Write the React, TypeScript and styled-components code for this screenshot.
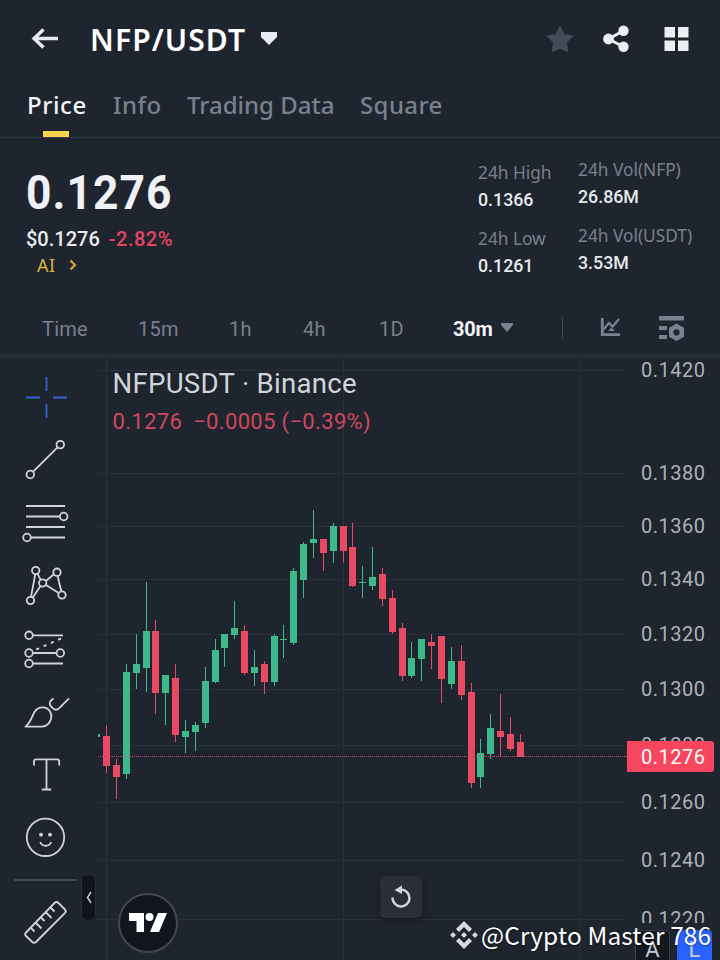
import React from 'react';
import styled, { createGlobalStyle } from 'styled-components';

const GlobalStyle = createGlobalStyle`
  * { box-sizing: border-box; }
  body { margin: 0; background: #1f252f; }
`;

const Page = styled.div`
  width: 720px;
  height: 960px;
  position: relative;
  overflow: hidden;
  display: flex;
  flex-direction: column;
  background: #1f252f;
  color: #eaecef;
  font-family: 'Noto Sans', sans-serif;
  white-space: nowrap;
`;

const Header = styled.header`
  height: 78px;
  display: flex;
  align-items: center;
  padding: 0 30px 0 31px;
`;

const Pair = styled.h1`
  margin: 2px 13px 0 31px;
  width: 158px;
  font: 600 30px/40px 'Noto Sans', sans-serif;
  letter-spacing: 1.1px;
  color: #fff;
`;

const HeaderActions = styled.div`
  margin-left: auto;
  display: flex;
  align-items: center;
  gap: 28px;
`;

const Tabs = styled.nav`
  height: 60px;
  display: flex;
  padding: 2px 0 0 27px;
  border-bottom: 1px solid #343b46;
`;

const Tab = styled.div<{ $active?: boolean; $width: number; $spacing?: number }>`
  width: ${p => p.$width}px;
  height: 57px;
  display: flex;
  flex-direction: column;
  justify-content: space-between;
  font: 500 24px/50px 'Noto Sans', sans-serif;
  letter-spacing: ${p => p.$spacing ?? 0}px;
  color: ${p => (p.$active ? '#f3f4f6' : '#79808e')};
`;

const Underline = styled.i`
  width: 26px;
  height: 6px;
  margin-left: 16px;
  background: #f5d54f;
`;

const Summary = styled.section`
  height: 164px;
  display: flex;
  justify-content: space-between;
  padding: 25px 0 0 26px;
`;

const PriceColumn = styled.div`
  display: flex;
  flex-direction: column;
`;

const LastPrice = styled.div`
  font: 700 49px/60px Roboto, sans-serif;
  letter-spacing: 1.2px;
  transform: scaleX(0.905);
  transform-origin: left;
  color: #eff1f4;
`;

const FiatRow = styled.div`
  display: flex;
  gap: 9px;
  margin-top: 1px;
  font: 500 20px/30px Roboto, sans-serif;
`;

const Change = styled.span`
  letter-spacing: 0.5px;
  color: #e34560;
`;

const AiLink = styled.div`
  display: flex;
  align-items: center;
  gap: 13px;
  margin-top: -1px;
  padding-left: 11px;
  font: 400 18px/24px 'Noto Sans', sans-serif;
  letter-spacing: 0.5px;
  color: #d9b43a;
`;

const Stats = styled.div`
  display: flex;
`;

const StatColumn = styled.div<{ $width: number; $offset: number }>`
  width: ${p => p.$width}px;
  margin-top: ${p => p.$offset}px;
`;

const Stat = styled.div`
  height: 66px;
`;

const StatLabel = styled.div`
  font: 400 17.3px/26px 'Noto Sans', sans-serif;
  color: #79808c;
`;

const StatValue = styled.div`
  font: 500 17.8px/27px Roboto, sans-serif;
  color: #e6e9ed;
`;

const Intervals = styled.nav`
  height: 52px;
  display: flex;
  align-items: center;
  padding-left: 42px;
  font: 400 20px/30px Roboto, sans-serif;
  color: #79808c;
`;

const Interval = styled.div<{ $width: number; $active?: boolean }>`
  width: ${p => p.$width}px;
  display: flex;
  align-items: center;
  gap: 8px;
  padding-top: 2px;
  font-weight: ${p => (p.$active ? 700 : 400)};
  letter-spacing: ${p => (p.$active ? '-0.2px' : '0.2px')};
  color: ${p => (p.$active ? '#f3f4f6' : '#79808c')};

  svg { margin-bottom: 3px; }
`;

const Separator = styled.i`
  width: 1px;
  height: 21px;
  margin-right: 36px;
  background: #414854;
`;

const ChartArea = styled.main`
  height: 606px;
  display: flex;
  border-top: 4px solid #262c36;
`;

const ToolBar = styled.aside`
  width: 98px;
  flex: none;
`;

const Plot = styled.section`
  flex: 1;
  position: relative;
`;

const Legend = styled.div`
  position: absolute;
  left: 14.5px;
  top: 7px;
  color: #d1d4dc;
  font: 400 27.6px/38px Roboto, sans-serif;
  letter-spacing: 0.28px;
`;

const LegendValues = styled.div`
  display: flex;
  gap: 11px;
  font-size: 22px;
  letter-spacing: 0.34px;
  color: #d0485d;
`;

const ResetButton = styled.button`
  position: absolute;
  left: 282px;
  top: 518px;
  width: 42px;
  height: 42px;
  display: grid;
  place-items: center;
  padding: 0;
  border: 0;
  border-radius: 5px;
  background: #2a2e39;
  box-shadow: 0 2px 5px #12161e;
`;

const TradingViewBadge = styled.div`
  position: absolute;
  left: 20px;
  top: 535px;
  width: 60px;
  height: 60px;
  display: grid;
  place-items: center;
  border: 2px solid #434854;
  border-radius: 50%;
  background: #11151e;
`;

const CollapseHandle = styled.div`
  position: absolute;
  left: -17px;
  top: 516px;
  width: 15px;
  height: 47px;
  display: grid;
  place-items: center;
  border: 1px solid #2a2f39;
  border-radius: 6px;
  background: #10141d;
`;

const PriceTag = styled.div`
  position: absolute;
  left: 529px;
  top: 383px;
  width: 87px;
  height: 31px;
  padding-left: 14px;
  border-radius: 0 3px 3px 0;
  background: #f6465d;
  color: #fff;
  font: 400 20px/32px Roboto, sans-serif;
  letter-spacing: 0.5px;
`;

const ScaleButtons = styled.div`
  position: absolute;
  left: 537px;
  top: 572px;
  display: flex;
  gap: 7px;
`;

const ScaleButton = styled.div<{ $on?: boolean }>`
  width: 35px;
  height: 36px;
  border: 1px solid ${p => (p.$on ? '#2962ff' : '#3a3f4a')};
  border-radius: 4px;
  background: ${p => (p.$on ? '#2962ff' : '#141821')};
  color: #c6cbd4;
  text-align: center;
  font: 400 22px/38px Roboto, sans-serif;
`;

const Watermark = styled.div`
  position: absolute;
  left: 450px;
  top: 915px;
  display: flex;
  align-items: center;
  gap: 3px;
  color: #fff;
  font: 400 24.4px/40px 'Noto Sans CJK SC', sans-serif;
  letter-spacing: 0.15px;
  text-shadow: 0 1px 2px #0008;
`;

const UP = '#3db98a';
const DOWN = '#ea4a61';
const ORIGIN_X = 98;
const ORIGIN_Y = 358;

type Candle = [x: number, up: number, top: number, bottom: number, high: number, low: number];

const candles: Candle[] = [
  [103, 0, 736, 766, 725, 773], [113, 0, 765, 777, 759, 799], [123, 1, 672, 774, 664, 779],
  [133, 1, 664, 673, 634, 689], [143, 1, 631, 668, 582, 692], [152, 0, 631, 693, 620, 714],
  [162, 1, 675, 693, 675, 725], [172, 0, 678, 735, 664, 742], [182, 1, 731, 737, 720, 753],
  [192, 1, 725, 732, 722, 751], [202, 1, 681, 723, 667, 728], [212, 1, 650, 682, 639, 683],
  [221, 1, 634, 648, 634, 667], [231, 1, 628, 635, 601, 639], [241, 0, 631, 673, 625, 675],
  [251, 1, 667, 673, 650, 686], [261, 0, 664, 682, 661, 694], [271, 1, 636, 682, 634, 686],
  [280, 1, 639, 640, 625, 658], [290, 1, 571, 643, 568, 645], [300, 1, 544, 580, 542, 598],
  [310, 1, 539, 543, 510, 558], [320, 0, 539, 553, 539, 571], [330, 1, 526, 551, 523, 563],
  [340, 0, 526, 551, 526, 563], [349, 0, 547, 586, 523, 587], [359, 1, 582, 583, 566, 598],
  [369, 1, 577, 586, 547, 590], [379, 0, 574, 599, 568, 606], [389, 0, 598, 632, 590, 634],
  [399, 0, 628, 676, 623, 681], [408, 1, 658, 676, 642, 678], [418, 1, 639, 659, 639, 681],
  [428, 0, 642, 646, 634, 669], [438, 0, 636, 679, 636, 703], [448, 1, 661, 684, 647, 689],
  [458, 0, 661, 695, 645, 700], [468, 0, 692, 783, 683, 788], [477, 1, 753, 777, 739, 788],
  [487, 1, 728, 754, 714, 759], [497, 0, 731, 737, 694, 756], [507, 0, 734, 749, 717, 751],
  [517, 0, 742, 757, 734, 757],
];

const levels: [y: number, label: string][] = [
  [370, '0.1420'], [473, '0.1380'], [526, '0.1360'], [579, '0.1340'], [634, '0.1320'],
  [689, '0.1300'], [745, '0.1280'], [802, '0.1260'], [860, '0.1240'], [919, '0.1220'],
];

const CandleChart = () => (
  <svg width="622" height="602" viewBox={`${ORIGIN_X} ${ORIGIN_Y} 622 602`} display="block">
    <defs>
      <clipPath id="axis"><rect x="627" y="358" width="93" height="565" /></clipPath>
    </defs>
    <g fill="#2a303a">
      {levels.map(([y]) => <rect key={y} x="98" y={y} width="529" height="1" />)}
      {[106, 343, 579].map(x => <rect key={x} x={x} y="358" width="1" height="602" />)}
    </g>
    <rect x="98" y="734" width="2" height="3" fill={UP} />
    {candles.map(([x, up, top, bottom, high, low]) => (
      <g key={x} fill={up ? UP : DOWN}>
        <rect x={x + 3} y={high} width="1" height={low - high} />
        <rect x={x} y={top} width="7" height={bottom - top} />
      </g>
    ))}
    <path d="M98 756.5H627" stroke="#c24c60" strokeDasharray="1 1" />
    <g clipPath="url(#axis)" fill="#adb1ba" fontFamily="Roboto, sans-serif" fontSize="20" letterSpacing="0.5">
      {levels.map(([y, label]) => <text key={y} x="641" y={y + 7}>{label}</text>)}
    </g>
  </svg>
);

const DrawingTools = () => (
  <svg width="98" height="602" viewBox="0 358 98 602" fill="none" stroke="#d1d4dc" strokeWidth="1.8" display="block">
    <path d="M46.500 377v14M46.500 404v14M26 397.500h14M53 397.500h14" stroke="#3562d2" />
    <g>
      <circle cx="60.300" cy="444.600" r="3.800" /><circle cx="30.300" cy="474.500" r="3.800" />
      <path d="M57.500 447.400 33.200 471.700" />
    </g>
    <g>
      <path d="M26 506h39M26 516.500h34M26 527h39M31 537.500h34" />
      <circle cx="63.700" cy="516.500" r="3.800" /><circle cx="27" cy="537.500" r="3.800" />
    </g>
    <g>
      <circle cx="35.700" cy="570.500" r="3.700" /><circle cx="57" cy="572.200" r="3.700" />
      <circle cx="42.700" cy="583" r="3.700" /><circle cx="62" cy="595" r="3.700" /><circle cx="30.500" cy="600.500" r="3.700" />
      <path d="M35.300 574.200 31 596.800M37.500 573.700l3.200 6.100M46 581l7.800-6.700M57.600 576l3.700 15.300M46 585l12.700 8M40.500 586l-7.700 11.500" />
    </g>
    <g>
      <circle cx="29" cy="635.300" r="3.800" /><circle cx="29" cy="653" r="3.800" />
      <circle cx="60.300" cy="653" r="3.800" /><circle cx="29" cy="663.500" r="3.800" />
      <path d="M33 635.300h30M33 653h23.500M33 663.500h30" />
      <path d="M37 649.200 61 638.500" strokeWidth="2" strokeDasharray="1.500 6.500" strokeLinecap="round" />
    </g>
    <g strokeLinejoin="round">
      <path d="M25.500 726.700C31 722 32 716 34.500 712c4-6 12-6 15.500-.5 3.500 6-.5 15-8.500 15.200Z" />
      <path d="M53.500 698.500c-4 2.500-4.500 5-3 7.300l2.500 2.600c2 1.700 4.200 1.600 6-.1l10-10" />
    </g>
    <path d="M34 765.500v-4q0-2.200 2.200-2.200H57q2.200 0 2.200 2.200v4M46.500 759.500v30M41.800 789.500h9.400" />
    <g>
      <circle cx="45.500" cy="837.300" r="18.700" />
      <path d="M40.200 842c2 5 9 5 11 0" />
      <g fill="#d1d4dc" stroke="none"><circle cx="41" cy="834.700" r="1.900" /><circle cx="50" cy="834.700" r="1.900" /></g>
    </g>
    <path d="M14 880h63" stroke="#444a55" />
    <g strokeLinejoin="round">
      <path d="M26 932.500 54.500 903q2-2 4 0l6.500 6.500q1.500 1.700 0 3.300L36 942q-2 1.600-3.700 0L26 936q-1.800-1.700 0-3.500Z" />
      <path d="m31 928 3.500 3.500M36 923l5.500 5.500M41 917.500l3.500 3.500M46 912.500l5.500 5.500M50.500 907.500l4 4" />
    </g>
  </svg>
);

const CaretDown = ({ large = false }: { large?: boolean }) => large ? (
  <svg width="16" height="14" viewBox="0 0 16 14"><path d="M0 0h16v5L8 13 0 5Z" fill="#e8eaef" /></svg>
) : (
  <svg width="12" height="9" viewBox="0 0 12 9"><path d="M0 0h12v2L6 9 0 2Z" fill="#79808e" /></svg>
);

const stats = [
  { width: 100, offset: 2, items: [['24h High', '0.1366'], ['24h Low', '0.1261']] },
  { width: 142, offset: -1, items: [['24h Vol(NFP)', '26.86M'], ['24h Vol(USDT)', '3.53M']] },
];

export default function App() {
  return (
    <Page>
      <GlobalStyle />
      <Header>
        <svg width="28" height="22" viewBox="0 0 28 22" fill="none" stroke="#e8eaef" strokeWidth="3.400">
          <path d="M12.500 1.500 3 10.500l9.500 9M3 10.500h24" />
        </svg>
        <Pair>NFP/USDT</Pair>
        <CaretDown large />
        <HeaderActions>
          <svg width="28" height="28" viewBox="0 0 28 28">
            <path d="m14 2.500 3.500 7.700 8.500 1.100-6.200 6 1.500 8.500L14 22.700l-7.300 3.100 1.500-8.500-6.200-6 8.500-1.100Z" fill="#444c5a" stroke="#444c5a" strokeWidth="2" strokeLinejoin="round" />
          </svg>
          <svg width="28" height="28" viewBox="0 0 28 28" fill="#eceef2">
            <path d="M22 5.500 6.500 14 22 22" fill="none" stroke="#eceef2" strokeWidth="3" />
            <circle cx="21.500" cy="5.700" r="5.200" /><circle cx="6.500" cy="14" r="5.400" /><circle cx="21.500" cy="21.700" r="5.200" />
          </svg>
          <svg width="32" height="28" viewBox="0 0 32 28" fill="#eceef2">
            <path d="M6.500 2H17v10.500H6.500ZM20 2h10.500v10.500H20ZM6.500 15.500H17V26H6.500ZM20 15.500h10.500V26H20Z" />
          </svg>
        </HeaderActions>
      </Header>
      <Tabs>
        <Tab $active $width={86} $spacing={0.6}>Price<Underline /></Tab>
        <Tab $width={74} $spacing={0.5}>Info</Tab>
        <Tab $width={173}>Trading Data</Tab>
        <Tab $width={100} $spacing={0.4}>Square</Tab>
      </Tabs>
      <Summary>
        <PriceColumn>
          <LastPrice>0.1276</LastPrice>
          <FiatRow><span>$0.1276</span><Change>-2.82%</Change></FiatRow>
          <AiLink>
            AI
            <svg width="8" height="12" viewBox="0 0 8 12" fill="none" stroke="#d9a52f" strokeWidth="2.200"><path d="m1.500 1.500 4.500 4.500-4.500 4.500" /></svg>
          </AiLink>
        </PriceColumn>
        <Stats>
          {stats.map(column => (
            <StatColumn key={column.width} $width={column.width} $offset={column.offset - 5}>
              {column.items.map(([label, value]) => (
                <Stat key={label}><StatLabel>{label}</StatLabel><StatValue>{value}</StatValue></Stat>
              ))}
            </StatColumn>
          ))}
        </Stats>
      </Summary>
      <Intervals>
        <Interval $width={96}>Time</Interval>
        <Interval $width={91}>15m</Interval>
        <Interval $width={74}>1h</Interval>
        <Interval $width={76}>4h</Interval>
        <Interval $width={74}>1D</Interval>
        <Interval $width={109} $active>30m<CaretDown /></Interval>
        <Separator />
        <svg width="60" height="26" viewBox="0 0 60 26" fill="none" stroke="#79808e" strokeWidth="2.800">
          <path d="M3.300 3v16.700H21" />
          <path d="m4 15 6-7 3.500 3.500L20 4" strokeWidth="2.400" />
          <path d="m9 16 3.500-3.500L16 16Z" fill="#79808e" stroke="none" />
        </svg>
        <svg width="26" height="28" viewBox="0 0 26 28" fill="#79808e">
          <path d="M0 2h25v4.500H0ZM0 12h8v4H0ZM0 21h8v4H0ZM17.500 9.500l7.500 4.300v8.900L17.500 27 10 22.700v-8.900Z" />
          <circle cx="17.500" cy="18.300" r="3.100" fill="#1f252f" />
        </svg>
      </Intervals>
      <ChartArea>
        <ToolBar><DrawingTools /></ToolBar>
        <Plot>
          <CandleChart />
          <Legend>
            NFPUSDT · Binance
            <LegendValues><span>0.1276</span><span>−0.0005 (−0.39%)</span></LegendValues>
          </Legend>
          <PriceTag>0.1276</PriceTag>
          <CollapseHandle>
            <svg width="6" height="13" viewBox="0 0 6 13" fill="none" stroke="#c6cbd4" strokeWidth="1.500"><path d="M5 1 1.500 6.500 5 12" /></svg>
          </CollapseHandle>
          <TradingViewBadge>
            <svg width="38" height="20" viewBox="0 0 38 20" fill="#fff">
              <path d="M0 0h15v19H7.500V8H0ZM29 0h9l-8 19h-9Z" /><circle cx="20.500" cy="4" r="4" />
            </svg>
          </TradingViewBadge>
          <ResetButton>
            <svg width="22" height="24" viewBox="0 0 22 24" fill="none" stroke="#d1d4dc" strokeWidth="2.500">
              <path d="M2.500 12.500a8.500 8.500 0 1 0 8.500-8H9" /><path d="m4.500 5 7.500-4.500v8.500Z" fill="#d1d4dc" stroke="none" />
            </svg>
          </ResetButton>
          <ScaleButtons><ScaleButton>A</ScaleButton><ScaleButton $on>L</ScaleButton></ScaleButtons>
        </Plot>
      </ChartArea>
      <Watermark>
        <svg width="28" height="28" viewBox="0 0 28 28" fill="#d9dadc">
          <path d="m14 0 8 8-3 3-5-5-5 5-3-3ZM14 28l8-8-3-3-5 5-5-5-3 3ZM3 11l3 3-3 3-3-3ZM25 11l3 3-3 3-3-3ZM14 11l3 3-3 3-3-3Z" />
        </svg>
        <span>@Crypto Master 786</span>
      </Watermark>
    </Page>
  );
}
